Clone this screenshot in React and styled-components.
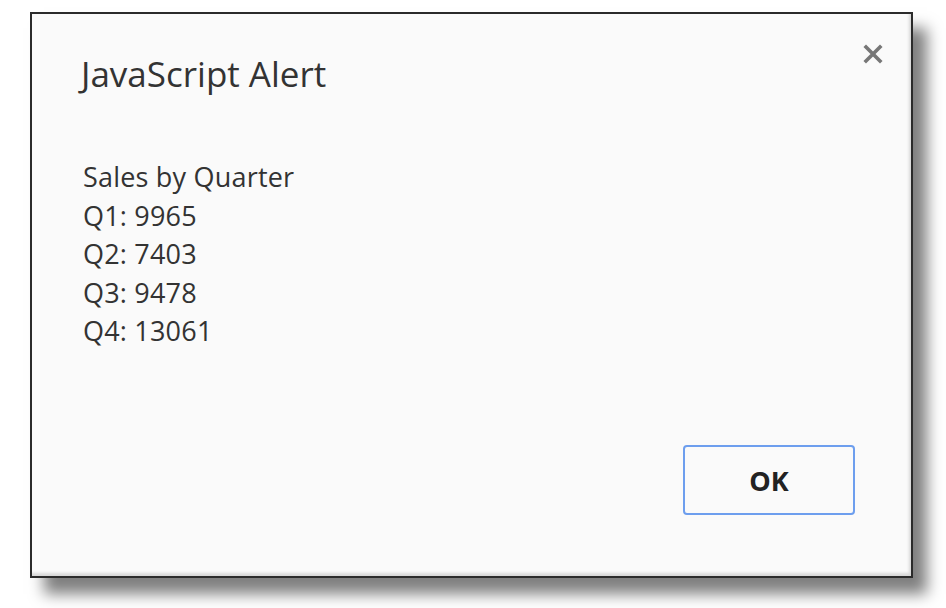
import styled, { createGlobalStyle } from "styled-components";

const GlobalStyle = createGlobalStyle`
  html, body {
    margin: 0;
    padding: 0;
    background: #ffffff;
  }
  body {
    font-family: "Open Sans", "Noto Sans", sans-serif;
  }
`;

const Page = styled.div`
  width: 946px;
  height: 608px;
  padding: 12px 0 0 30px;
  box-sizing: border-box;
  overflow: hidden;
`;

const Dialog = styled.div`
  position: relative;
  width: 883px;
  height: 566px;
  box-sizing: border-box;
  border: 2px solid #2b2b2b;
  background: #fafafa;
  box-shadow: inset -4px -5px 3px -2px #d8d8d8, 14px 16px 14px rgba(0, 0, 0, 0.5);
  display: flex;
  flex-direction: column;
  padding: 36px 56px 0 49px;
`;

const Title = styled.h1`
  margin: 0;
  font-family: "Open Sans", "Noto Sans", sans-serif;
  font-weight: 400;
  font-size: 35px;
  line-height: 48px;
  color: #333;
`;

const CloseButton = styled.button`
  position: absolute;
  top: 28px;
  right: 26px;
  width: 24px;
  height: 24px;
  padding: 0;
  border: none;
  background: transparent;
  display: flex;
  align-items: center;
  justify-content: center;
`;

const Message = styled.div`
  margin-top: 60px;
  padding-left: 2px;
  font-size: 27px;
  letter-spacing: 0.2px;
  line-height: 38.5px;
  color: #333;
`;

const Line = styled.div``;

const Footer = styled.div`
  margin-top: auto;
  padding-bottom: 61px;
  display: flex;
  justify-content: flex-end;
`;

const OkButton = styled.button`
  width: 172px;
  height: 70px;
  box-sizing: border-box;
  border: 2px solid #6d9eee;
  border-radius: 4px;
  background: #fafafa;
  font-family: "Open Sans", "Noto Sans", sans-serif;
  font-weight: 700;
  font-size: 27px;
  color: #222;
  cursor: pointer;
`;

const lines = ["Sales by Quarter", "Q1: 9965", "Q2: 7403", "Q3: 9478", "Q4: 13061"];

export default function App() {
  return (
    <>
      <GlobalStyle />
      <Page>
        <Dialog>
          <Title>JavaScript Alert</Title>
          <CloseButton aria-label="Close">
            <svg width="20" height="20" viewBox="0 0 20 20">
              <path d="M3 3 L17 17 M17 3 L3 17" stroke="#777" strokeWidth="3.6" strokeLinecap="square" />
            </svg>
          </CloseButton>
          <Message>
            {lines.map((l) => (
              <Line key={l}>{l}</Line>
            ))}
          </Message>
          <Footer>
            <OkButton>OK</OkButton>
          </Footer>
        </Dialog>
      </Page>
    </>
  );
}
